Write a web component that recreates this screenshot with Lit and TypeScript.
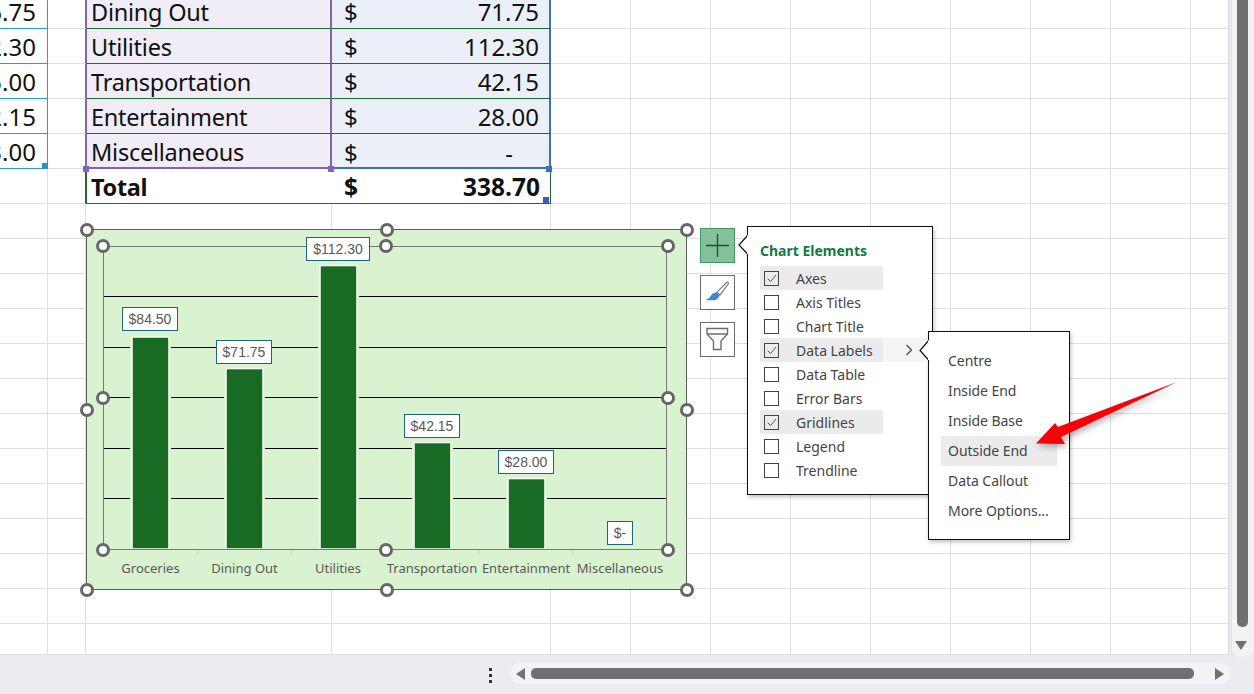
import { LitElement, html, css, svg } from "lit";
import { customElement } from "lit/decorators.js";

const COLS = [48, 38, 246, 219, 80, 80, 80, 80, 80, 80, 80, 80, 38];
const ROW_COUNT = 19;

const TABLE = [
  { left: "36.75", name: "Dining Out", value: "71.75" },
  { left: "92.30", name: "Utilities", value: "112.30" },
  { left: "45.00", name: "Transportation", value: "42.15" },
  { left: "12.15", name: "Entertainment", value: "28.00" },
  { left: "13.00", name: "Miscellaneous", value: "-" },
];

const BARS = [
  { name: "Groceries", label: "$84.50", x: 132, top: 337, lx: 122, ly: 307, lw: 56, cx: 150.5 },
  { name: "Dining Out", label: "$71.75", x: 226, top: 368.5, lx: 216, ly: 339.5, lw: 56, cx: 244.5 },
  { name: "Utilities", label: "$112.30", x: 320, top: 265.5, lx: 306, ly: 237, lw: 64, cx: 338 },
  { name: "Transportation", label: "$42.15", x: 414, top: 442.5, lx: 404, ly: 414, lw: 56, cx: 432 },
  { name: "Entertainment", label: "$28.00", x: 508, top: 478.5, lx: 498, ly: 450, lw: 56, cx: 526 },
  { name: "Miscellaneous", label: "$-", x: 0, top: 0, lx: 607, ly: 521, lw: 26, cx: 620 },
];

const GRID_Y = [296.5, 347.5, 397.5, 448.5, 498.5];
const TICKS = [197.5, 291.5, 385, 478.5, 572.5];
const OUTER_HANDLES = [[87, 230], [387, 230], [687, 230], [87, 410], [687, 410], [87, 590], [387, 590], [687, 590]];
const INNER_HANDLES = [[103, 246], [386, 246], [668, 246], [103, 398], [668, 398], [103, 550], [386, 550], [668, 550]];

const ELEMENTS = [
  { name: "Axes", on: true },
  { name: "Axis Titles", on: false },
  { name: "Chart Title", on: false },
  { name: "Data Labels", on: true, more: true },
  { name: "Data Table", on: false },
  { name: "Error Bars", on: false },
  { name: "Gridlines", on: true },
  { name: "Legend", on: false },
  { name: "Trendline", on: false },
];
const SUBITEMS = ["Centre", "Inside End", "Inside Base", "Outside End", "Data Callout", "More Options..."];

@customElement("app-root")
export class AppRoot extends LitElement {
  static styles = css`
    :host { display: block; width: 1254px; height: 694px; overflow: hidden; background: #ebebf1; font-family: "Noto Sans", sans-serif; }
    .main { display: flex; height: 654px; }
    .sheet { position: relative; width: 1229px; height: 654px; overflow: hidden; background: #fff; border-bottom: 1px solid #dedede; box-sizing: content-box; }
    .grid { display: grid; grid-auto-rows: 35px; margin-top: -6px; }
    .cell { box-sizing: border-box; border-right: 1px solid #dedede; border-bottom: 1px solid #dedede; font-family: "Noto Sans", sans-serif; font-size: 24px; color: #111; display: flex; align-items: center; overflow: hidden; white-space: nowrap; min-width: 0; padding-top: 1px; }
    .cell.a { justify-content: flex-end; padding-right: 11px; border-right-color: #23a0d8; border-bottom-color: #23a0d8; }
    .cell.name { background: #f0edf7; padding-left: 4px; font-size: 23.5px; letter-spacing: -0.25px; border-left: 1px solid #8562b6; border-right: 2px solid #8562b6; border-bottom-color: #1d6b2f; }
    .cell.amount { background: #ebf0f8; border-right: 2px solid #3a70c4; border-bottom-color: #1d6b2f; padding: 1px 10px 0 12px; justify-content: space-between; }
    .cell.prev-name { border-right: 1px solid #8562b6; }
    .cell.lastrow { border-bottom: 2px solid #8562b6; padding-top: 3px; }
    .cell.amount.lastrow { border-bottom: 2px solid #3a70c4; padding-top: 3px; }
    .cell .dashv { padding-right: 26px; }
    .cell.total-name { font-weight: 700; padding-left: 4px; font-size: 23.5px; letter-spacing: -0.35px; border-right: none; border-bottom: 1px solid #1d6b2f; border-left: 1px solid #1d6b2f; }
    .cell.total-amount { font-weight: 700; font-size: 24.5px; border-right: 1px solid #1d6b2f; border-bottom: 1px solid #1d6b2f; padding: 1px 10px 0 12px; justify-content: space-between; }
    .cell.total-prev { border-right-color: #1d6b2f; }
    .sq { position: absolute; width: 6px; height: 6px; }

    .vscroll { position: relative; flex: 1; background: #f3f3f5; border-left: 3px solid #e6e6ee; border-radius: 0 0 9px 9px; height: 657px; box-sizing: border-box; }
    .vthumb { position: absolute; left: 5px; top: -5px; width: 11px; height: 632px; border-radius: 0 0 5px 5px; background: #707070; }
    .vdown { position: absolute; left: 3px; top: 641px; width: 0; height: 0; border-left: 6px solid transparent; border-right: 6px solid transparent; border-top: 9px solid #707070; }
    .bottom { display: flex; align-items: flex-start; height: 40px; padding-top: 9px; box-sizing: border-box; position: relative; }
    .dots { width: 510px; display: flex; flex-direction: column; align-items: center; gap: 3px; padding: 5px 0 0 470px; box-sizing: border-box; }
    .dots i { width: 3px; height: 3px; background: #333; display: block; }
    .htrack { width: 721px; height: 21px; border-radius: 10px; background: #f3f3f5; display: flex; align-items: center; padding: 0 6px; box-sizing: border-box; }
    .harrow-l { width: 0; height: 0; border-top: 6px solid transparent; border-bottom: 6px solid transparent; border-right: 9px solid #707070; }
    .hthumb { width: 663px; height: 11px; background: #707070; border-radius: 5px; margin: 0 21px 0 6px; }
    .harrow-r { width: 0; height: 0; border-top: 6px solid transparent; border-bottom: 6px solid transparent; border-left: 9px solid #707070; }

    .layer { position: absolute; inset: 0; }
    .chart-bg { position: absolute; left: 86px; top: 229px; width: 601px; height: 361px; box-sizing: border-box; background: #d9f2d0; border: 1px solid #5c5c5c; }
    .plot-frame { position: absolute; left: 103px; top: 246px; width: 564px; height: 304px; box-sizing: border-box; border: 1px solid #777; border-bottom: none; }
    .chart-svg { position: absolute; left: 0; top: 0; }
    .handle { position: absolute; width: 14px; height: 14px; box-sizing: border-box; border: 3px solid #666; border-radius: 50%; background: #fff; transform: translate(-50%, -50%); }
    .dlabel { position: absolute; height: 24px; box-sizing: border-box; background: #fff; border: 1px solid #1d6384; font: 14px/22px "Liberation Sans", sans-serif; color: #595959; text-align: center; }
    .catlabel { position: absolute; top: 560px; transform: translateX(-50%); font: 13px/16px "Noto Sans", sans-serif; color: #595959; white-space: nowrap; }

    .tool { position: absolute; left: 700px; width: 35px; height: 35px; box-sizing: border-box; border: 1px solid #6a6a6a; background: #fff; display: flex; }
    .tool.plus { top: 228px; background: #86bf9b; border-color: #3d9a60; }
    .tool.brush { top: 275px; }
    .tool.filter { top: 322px; }

    .pop { position: absolute; box-sizing: border-box; background: #fff; border: 1.5px solid #111; box-shadow: 1px 2px 4px rgba(0,0,0,.25); font-size: 14px; color: #444; }
    .notch { position: absolute; }
    .elements { left: 747px; top: 226px; width: 186px; height: 269px; padding: 14px 7px 0 12px; }
    .pop-title { font-weight: 700; font-size: 14px; line-height: 20px; color: #127a42; margin-bottom: 5px; }
    .el-row { display: flex; height: 24px; align-items: center; }
    .el-main { display: flex; align-items: center; width: 123px; height: 24px; padding-left: 4px; box-sizing: border-box; }
    .el-row.on .el-main { background: #ebebeb; }
    .el-row.more { background: #f5f5f5; }
    .box { width: 15px; height: 15px; box-sizing: border-box; border: 1.2px solid #444; background: transparent; margin-right: 17px; display: flex; }
    .chev { margin-left: 22px; display: flex; }
    .sub { left: 928px; top: 331px; width: 142px; height: 209px; padding: 14px 12px 0 12px; }
    .sub-item { height: 30px; line-height: 30px; padding-left: 7px; letter-spacing: -0.05px; }
    .sub-item.hot { background: #ebebeb; }
    .arrow { position: absolute; left: 0; top: 0; filter: drop-shadow(2px 3px 3px rgba(0,0,0,.3)); }
  `;

  private renderGrid() {
    const cells = [];
    for (let r = 0; r < ROW_COUNT; r++) {
      for (let c = 0; c < COLS.length; c++) {
        const t = TABLE[r];
        if (t && c === 0) cells.push(html`<div class="cell a"><span>${t.left}</span></div>`);
        else if (t && c === 1) cells.push(html`<div class="cell prev-name"></div>`);
        else if (t && c === 2) cells.push(html`<div class="cell name ${r === 4 ? "lastrow" : ""}">${t.name}</div>`);
        else if (t && c === 3) cells.push(html`<div class="cell amount ${r === 4 ? "lastrow" : ""}"><span>$</span><span class=${t.value === "-" ? "dashv" : ""}>${t.value}</span></div>`);
        else if (r === 5 && c === 1) cells.push(html`<div class="cell total-prev"></div>`);
        else if (r === 5 && c === 2) cells.push(html`<div class="cell total-name">Total</div>`);
        else if (r === 5 && c === 3) cells.push(html`<div class="cell total-amount"><span>$</span><span>338.70</span></div>`);
        else cells.push(html`<div class="cell"></div>`);
      }
    }
    return html`<div class="grid" style="grid-template-columns:${COLS.map((w) => w + "px").join(" ")}">${cells}</div>`;
  }

  private renderChartSvg() {
    return html`<svg class="chart-svg" width="1229" height="654" viewBox="0 0 1229 654">
      ${GRID_Y.map((y) => svg`<line x1="104" x2="666" y1=${y} y2=${y} stroke="#000" stroke-width="1"/>`)}
      ${BARS.filter((b) => b.x).map((b) => svg`
        <rect x=${b.x - 2} y=${b.top - 2} width="41" height=${551 - b.top} fill="#d9f2d0"/>
        <rect x=${b.x} y=${b.top} width="37" height=${549 - b.top} fill="#196b24" stroke="#f4faf2" stroke-width="1.6"/>`)}
      <line x1="104" x2="666" y1="549.5" y2="549.5" stroke="#777" stroke-width="1"/>
      ${TICKS.map((x) => svg`<line x1=${x} x2=${x} y1="550" y2="555" stroke="#c6d8c0" stroke-width="1"/>`)}
    </svg>`;
  }

  render() {
    return html`
      <div class="main">
        <div class="sheet">
          ${this.renderGrid()}
          <div class="sq" style="left:42px;top:163px;background:#2f8fc4"></div>
          <div class="sq" style="left:83px;top:166px;background:#8562b6"></div>
          <div class="sq" style="left:328px;top:166px;background:#8562b6"></div>
          <div class="sq" style="left:546px;top:166px;background:#3a70c4"></div>
          <div class="sq" style="left:543px;top:197px;background:#3f5fb0"></div>
          <div class="layer">
            <div class="chart-bg"></div>
            <div class="plot-frame"></div>
            ${this.renderChartSvg()}
            ${BARS.map((b) => html`<div class="dlabel" style="left:${b.lx}px;top:${b.ly}px;width:${b.lw}px">${b.label}</div>`)}
            ${BARS.map((b) => html`<div class="catlabel" style="left:${b.cx}px">${b.name}</div>`)}
            ${[...OUTER_HANDLES, ...INNER_HANDLES].map(([x, y]) => html`<div class="handle" style="left:${x}px;top:${y}px"></div>`)}
            <div class="tool plus">
              <svg width="33" height="33" viewBox="0 0 33 33"><path d="M16.5 5v23M5 16.5h23" stroke="#11572c" stroke-width="1.3" fill="none"/></svg>
            </div>
            <div class="tool brush">
              <svg width="33" height="33" viewBox="0 0 33 33">
                <path d="M25.5 6.5c1.500-.8 2.300.2 1.700 1.500L19 19l-3-2.800z" fill="#fff" stroke="#7a7a7a" stroke-width="1.2"/>
                <path d="M15.600 16.500l3 2.900c-1 3.200-3.300 4.600-6.300 4.800-2.200.2-5.400.2-7.300-.8 2.800-.4 3.600-1.500 4.600-3.300 1.200-2.500 3.600-4 6-3.600z" fill="#3f86cf"/>
              </svg>
            </div>
            <div class="tool filter">
              <svg width="33" height="33" viewBox="0 0 33 33"><path d="M6 5.500h20.500v5.500l-6.500 7v8.500h-7.500V18L6 11zM6 11h20.500" fill="#fff" stroke="#6e6e6e" stroke-width="1.4"/></svg>
            </div>
            <div class="pop elements">
              <div class="pop-title">Chart Elements</div>
              ${ELEMENTS.map((e) => html`<div class="el-row ${e.on ? "on" : ""} ${e.more ? "more" : ""}">
                <div class="el-main">
                  <div class="box">${e.on ? html`<svg width="13" height="13" viewBox="0 0 13 13"><path d="M2.500 6.500l3 3 5.500-6.500" stroke="#555" stroke-width="1" fill="none"/></svg>` : ""}</div>
                  <span>${e.name}</span>
                </div>
                ${e.more ? html`<div class="chev"><svg width="8" height="12" viewBox="0 0 8 12"><path d="M1.500 1l5 5-5 5" stroke="#444" stroke-width="1.2" fill="none"/></svg></div>` : ""}
              </div>`)}
            </div>
            <svg class="notch" style="left:737px;top:234px" width="12" height="22" viewBox="0 0 12 22"><path d="M11 1L2 11l9 9.500" fill="#fff" stroke="#111" stroke-width="1.2"/><rect x="10" y="1.500" width="2.500" height="18.500" fill="#fff"/></svg>
            <div class="pop sub">
              ${SUBITEMS.map((s) => html`<div class="sub-item ${s === "Outside End" ? "hot" : ""}">${s}</div>`)}
            </div>
            <svg class="notch" style="left:918px;top:339px" width="12" height="23" viewBox="0 0 12 23"><path d="M11 1L2 11.500l9 10" fill="#fff" stroke="#111" stroke-width="1.2"/><rect x="10" y="1.500" width="2.500" height="19.500" fill="#fff"/></svg>
            <svg class="arrow" width="1229" height="654" viewBox="0 0 1229 654"><path d="M1177 382L1058 427l-3-4-19 20.500 29 .5-4-7z" fill="#f90008"/></svg>
          </div>
        </div>
        <div class="vscroll"><div class="vthumb"></div><div class="vdown"></div></div>
      </div>
      <div class="bottom">
        <div class="dots"><i></i><i></i><i></i></div>
        <div class="htrack"><div class="harrow-l"></div><div class="hthumb"></div><div class="harrow-r"></div></div>
      </div>
    `;
  }
}
